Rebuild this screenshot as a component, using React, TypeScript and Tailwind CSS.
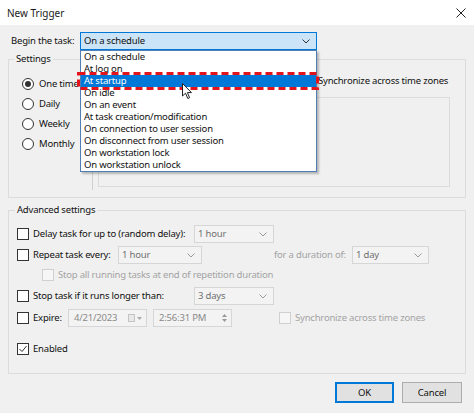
import React from 'react';

const listItems = [
  'On a schedule',
  'At log on',
  'At startup',
  'On idle',
  'On an event',
  'At task creation/modification',
  'On connection to user session',
  'On disconnect from user session',
  'On workstation lock',
  'On workstation unlock',
];

function Chevron({ className = 'text-[#9a9a9a]' }: { className?: string }) {
  return (
    <svg width="8" height="5" viewBox="0 0 8 5" className={className}>
      <path d="M0.5 0.5 L4 4 L7.5 0.5" fill="none" stroke="currentColor" strokeWidth="1" />
    </svg>
  );
}

function CheckBox({ checked = false, disabled = false }: { checked?: boolean; disabled?: boolean }) {
  return (
    <span
      className={`w-[12px] h-[12px] shrink-0 border flex items-center justify-center ${
        disabled ? 'border-[#d0d0d0] bg-[#f6f6f6]' : 'border-[#333333] bg-white'
      }`}
    >
      {checked && (
        <svg width="10" height="10" viewBox="0 0 10 10">
          <path d="M1.5 5 L4 7.5 L8.5 2" fill="none" stroke="#333333" strokeWidth="1" />
        </svg>
      )}
    </span>
  );
}

function Radio({ checked = false }: { checked?: boolean }) {
  return (
    <span className="w-[12px] h-[12px] shrink-0 rounded-full border border-[#333333] bg-white flex items-center justify-center">
      {checked && <span className="w-[6px] h-[6px] rounded-full bg-[#333333]" />}
    </span>
  );
}

function Combo({ value, className = '' }: { value: string; className?: string }) {
  return (
    <div
      className={`h-[18px] shrink-0 flex items-center justify-between border border-[#d6d6d6] bg-[#f3f3f3] pl-[3px] pr-[6px] text-[#707070] ${className}`}
    >
      <span>{value}</span>
      <Chevron />
    </div>
  );
}

export default function App() {
  return (
    <div className="relative w-[474px] h-[413px] overflow-hidden bg-[#f0f0f0] text-[9.5px] tracking-[-0.2px] leading-[12px] whitespace-nowrap text-[#111] font-['Noto_Sans',sans-serif]">
      {/* title bar */}
      <div className="h-[25px] bg-white flex items-center justify-between pl-[7px] pr-[8px]">
        <span className="text-[10px] tracking-normal text-[#1a1a1a]">New Trigger</span>
        <svg width="10" height="10" viewBox="0 0 10 10">
          <path d="M0.5 0.5 L9.5 9.5 M9.5 0.5 L0.5 9.5" stroke="#222" strokeWidth="1" />
        </svg>
      </div>

      {/* begin the task */}
      <div className="flex items-center mt-[7px] pl-[11px]">
        <span className="w-[69px]">Begin the task:</span>
        <div className="w-[237px] h-[18px] flex items-center justify-between border border-[#0078d7] bg-[#cce4f7] pl-[3px] pr-[6px]">
          <span>On a schedule</span>
          <Chevron className="text-[#333]" />
        </div>
      </div>

      {/* Settings */}
      <fieldset className="mx-[8px] mt-[2px] h-[146px] border border-[#dcdcdc]">
        <legend className="ml-[5px] px-[2px] leading-[14px]">Settings</legend>
        <div className="flex">
          <div className="w-[83px] pl-[13px] pt-[8px] flex flex-col">
            {['One time', 'Daily', 'Weekly', 'Monthly'].map((r, i) => (
              <div key={r} className="h-[20px] flex items-center gap-[5px]">
                <Radio checked={i === 0} />
                <span>{r}</span>
              </div>
            ))}
          </div>
          <div className="mt-[4px] h-[120px] border-l border-[#d0d0d0]" />
          <div className="pl-[5px] flex flex-col">
            <div className="mt-[7px] h-[16px] flex items-center">
              <span className="w-[30px]">Start:</span>
              <div className="w-[84px] h-[16px] border border-[#7a7a7a] bg-white" />
              <div className="ml-[4px] w-[80px] h-[16px] border border-[#7a7a7a] bg-white" />
              <span className="ml-[6px]">
                <CheckBox />
              </span>
              <span className="ml-[4px]">Synchronize across time zones</span>
            </div>
            <div className="mt-[8px] w-[352px] h-[90px] border border-[#dcdcdc]" />
          </div>
        </div>
      </fieldset>

      {/* Advanced settings */}
      <fieldset className="mx-[8px] mt-[5px] h-[171px] border border-[#dcdcdc]">
        <legend className="ml-[6px] px-[2px] leading-[14px]">Advanced settings</legend>
        <div className="pl-[8px] flex flex-col">
          <div className="mt-[8px] h-[18px] flex items-center">
            <CheckBox />
            <span className="ml-[4px] w-[161px]">Delay task for up to (random delay):</span>
            <Combo value="1 hour" className="w-[80px]" />
          </div>
          <div className="mt-[3px] h-[18px] flex items-center">
            <CheckBox />
            <span className="ml-[4px] w-[85px]">Repeat task every:</span>
            <Combo value="1 hour" className="w-[84px]" />
            <span className="ml-[72px] w-[78px] text-[#a3a3a3]">for a duration of:</span>
            <Combo value="1 day" className="w-[77px] text-[#555]" />
          </div>
          <div className="mt-[2px] h-[18px] flex items-center pl-[25px]">
            <CheckBox disabled />
            <span className="ml-[4px] text-[#a3a3a3]">Stop all running tasks at end of repetition duration</span>
          </div>
          <div className="mt-[3px] h-[18px] flex items-center">
            <CheckBox />
            <span className="ml-[4px] w-[161px]">Stop task if it runs longer than:</span>
            <Combo value="3 days" className="w-[80px]" />
          </div>
          <div className="mt-[4px] h-[18px] flex items-center">
            <CheckBox />
            <span className="ml-[4px] w-[35px]">Expire:</span>
            <div className="w-[79px] h-[18px] flex items-center justify-between border border-[#d6d6d6] bg-[#f3f3f3] pl-[5px] pr-[4px] text-[#8a8a8a]">
              <span>4/21/2023</span>
              <span className="flex items-center gap-[2px]">
                <span className="w-[7px] h-[8px] border border-[#c4c4c4] bg-[#e8e8e8]" />
                <svg width="5" height="3" viewBox="0 0 5 3">
                  <path d="M0 0 L5 0 L2.5 3 Z" fill="#aaaaaa" />
                </svg>
              </span>
            </div>
            <div className="ml-[6px] w-[79px] h-[18px] flex items-center justify-between border border-[#d6d6d6] bg-[#f3f3f3] pl-[5px] pr-[4px] text-[#8a8a8a]">
              <span>2:56:31 PM</span>
              <svg width="5" height="10" viewBox="0 0 5 10">
                <path d="M0 4 L5 4 L2.5 1 Z M0 6 L5 6 L2.5 9 Z" fill="#999999" />
              </svg>
            </div>
            <span className="ml-[47px]">
              <CheckBox disabled />
            </span>
            <span className="ml-[4px] text-[#a3a3a3]">Synchronize across time zones</span>
          </div>
          <div className="mt-[13px] h-[18px] flex items-center">
            <CheckBox checked />
            <span className="ml-[4px]">Enabled</span>
          </div>
        </div>
      </fieldset>

      {/* buttons */}
      <div className="mt-[8px] pr-[12px] flex justify-end gap-[8px]">
        <button className="w-[59px] h-[21px] border-2 border-[#0078d7] bg-[#e1e1e1] flex items-center justify-center">
          OK
        </button>
        <button className="w-[60px] h-[21px] border border-[#adadad] bg-[#e1e1e1] flex items-center justify-center">
          Cancel
        </button>
      </div>

      {/* dropdown list overlay */}
      <div className="absolute left-[80px] top-[50px] w-[237px] border border-[#4f7fb6] bg-white shadow-[2px_2px_2px_rgba(0,0,0,0.25)]">
        {listItems.map((item, i) => (
          <div
            key={item}
            className={`h-[12px] flex items-center pl-[3px] ${i === 2 ? 'bg-[#0078d7] text-white' : ''}`}
          >
            {item}
          </div>
        ))}
      </div>

      {/* red dashed annotation */}
      <svg className="absolute left-[77px] top-[72px]" width="242" height="18" viewBox="0 0 242 18">
        <rect x="1.5" y="1.5" width="239" height="15" fill="none" stroke="#e3141b" strokeWidth="3" strokeDasharray="7 4" />
      </svg>

      {/* mouse cursor */}
      <svg className="absolute left-[182px] top-[83px]" width="11" height="17" viewBox="0 0 11 17">
        <path d="M0.5 0.5 L0.5 13 L3.5 10.2 L5.8 15.5 L7.6 14.7 L5.4 9.6 L9.5 9.6 Z" fill="white" stroke="#222" strokeWidth="1" strokeLinejoin="round" />
      </svg>
    </div>
  );
}
